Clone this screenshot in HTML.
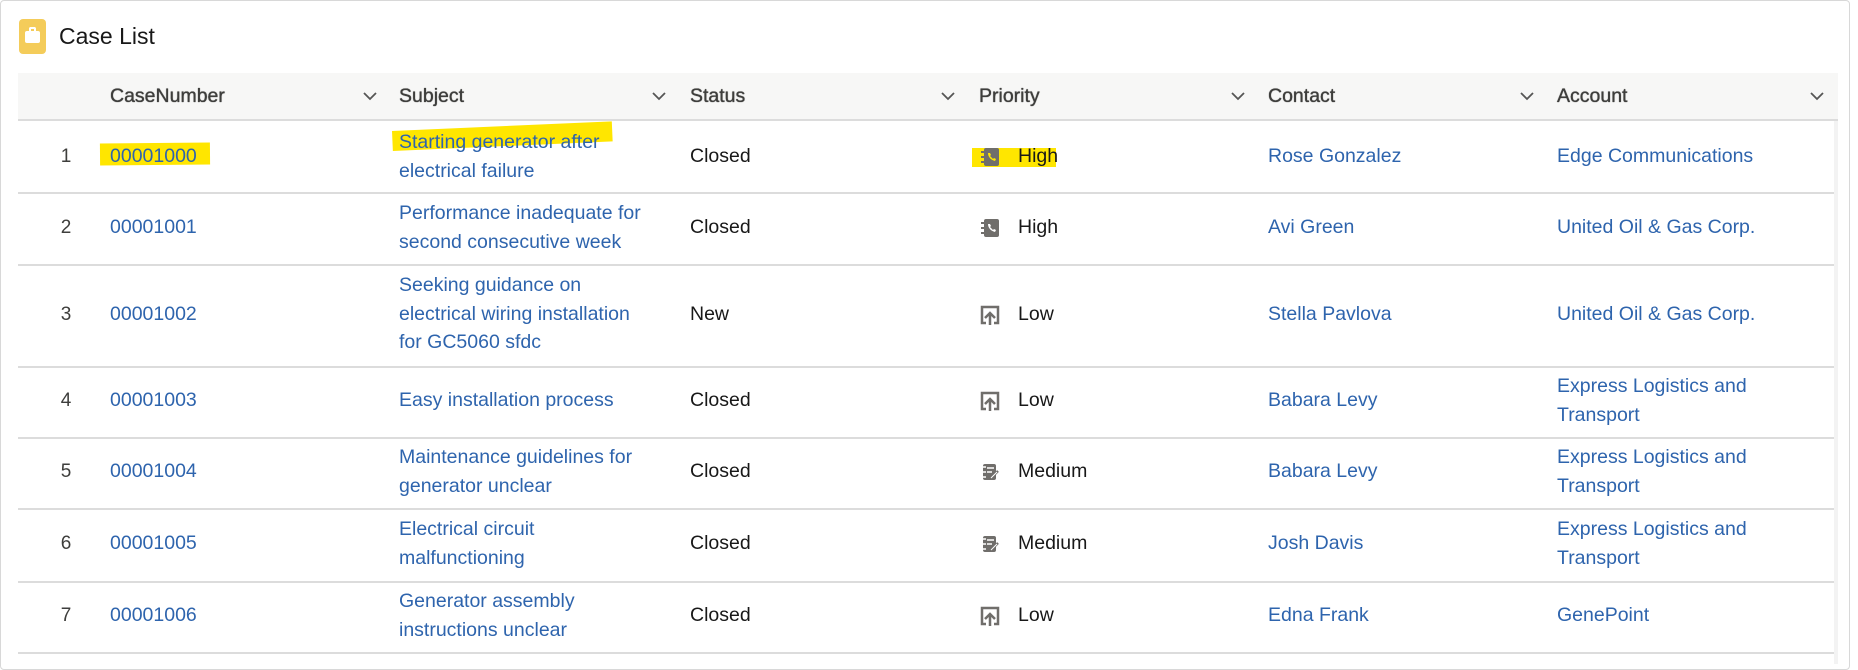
<!DOCTYPE html>
<html><head><style>
body{margin:0;width:1858px;height:664px;background:#fff;font-family:"Liberation Sans",sans-serif;overflow:hidden;position:relative}
.card{position:absolute;left:0;top:0;width:1850px;height:670px;border:1px solid #d8d8d8;border-radius:4px;box-sizing:border-box}
.t{position:absolute;font-size:19.5px;line-height:28.5px;color:#181818;white-space:nowrap}
.a{color:#2e64ad}
.h{position:absolute;left:18px;top:73px;width:1820px;height:48px;background:#f7f7f6;border-bottom:2px solid #dcdcdc;box-sizing:border-box}
.hl{position:absolute;top:85px;font-size:19.5px;color:#3e3e3c;text-shadow:0 0 .6px #3e3e3c,0 0 .6px #3e3e3c}
.ch{position:absolute;top:88px;width:16px;height:16px}
.line{position:absolute;left:18px;width:1816px;height:2px;background:#dcdcdc}
.n{position:absolute;width:20px;text-align:center;font-size:19px;line-height:28px;color:#3e3e3c}
.y{position:absolute;background:#ffe600}
.ic{position:absolute;width:20px;height:20px}
</style></head><body>
<div class="card"></div>
<div style="position:absolute;left:1834px;top:121px;width:4px;height:543px;background:#f3f3f3"></div>
<div style="position:absolute;left:19px;top:19px;width:27px;height:35px;background:#f4cc5a;border-radius:4px"></div>
<div style="position:absolute;left:25px;top:31px;width:15px;height:12px;background:#fff;border-radius:2px"></div>
<div style="position:absolute;left:29px;top:27px;width:7px;height:5px;border:2px solid #fff;border-bottom:none;box-sizing:border-box;border-radius:2px 2px 0 0"></div>
<div class="t" style="left:59px;top:21px;font-size:23px;line-height:30px;color:#181818">Case List</div>
<div class="h"></div>
<div class="hl" style="left:110px">CaseNumber</div>
<div class="hl" style="left:399px">Subject</div>
<div class="hl" style="left:690px">Status</div>
<div class="hl" style="left:979px">Priority</div>
<div class="hl" style="left:1268px">Contact</div>
<div class="hl" style="left:1557px">Account</div>
<svg class="ch" style="left:362px" viewBox="0 0 16 16"><path d="M2 5l6 6 6-6" fill="none" stroke="#555" stroke-width="1.8"/></svg>
<svg class="ch" style="left:651px" viewBox="0 0 16 16"><path d="M2 5l6 6 6-6" fill="none" stroke="#555" stroke-width="1.8"/></svg>
<svg class="ch" style="left:940px" viewBox="0 0 16 16"><path d="M2 5l6 6 6-6" fill="none" stroke="#555" stroke-width="1.8"/></svg>
<svg class="ch" style="left:1230px" viewBox="0 0 16 16"><path d="M2 5l6 6 6-6" fill="none" stroke="#555" stroke-width="1.8"/></svg>
<svg class="ch" style="left:1519px" viewBox="0 0 16 16"><path d="M2 5l6 6 6-6" fill="none" stroke="#555" stroke-width="1.8"/></svg>
<svg class="ch" style="left:1809px" viewBox="0 0 16 16"><path d="M2 5l6 6 6-6" fill="none" stroke="#555" stroke-width="1.8"/></svg>

<!-- highlights -->
<div class="y" style="left:100px;top:143px;width:110px;height:22px;transform:rotate(-0.5deg)"></div>
<div class="y" style="left:392px;top:131px;width:220px;height:20px;transform:rotate(-2.5deg);transform-origin:0 0"></div>
<div class="y" style="left:972px;top:148px;width:84px;height:19px"></div>

<div class="line" style="top:192px"></div>
<div class="line" style="top:264px"></div>
<div class="line" style="top:366px"></div>
<div class="line" style="top:437px"></div>
<div class="line" style="top:508px"></div>
<div class="line" style="top:581px"></div>
<div class="line" style="top:652px"></div>

<!-- rows -->
<div class="n" style="left:56px;top:143px">1</div>
<div class="t a" style="left:110px;top:142px">00001000</div>
<div class="t a" style="left:399px;top:128px">Starting generator after<br>electrical failure</div>
<div class="t" style="left:690px;top:142px">Closed</div>
<div class="t" style="left:1018px;top:142px">High</div>
<div class="t a" style="left:1268px;top:142px">Rose Gonzalez</div>
<div class="t a" style="left:1557px;top:142px">Edge Communications</div>

<div class="n" style="left:56px;top:214px">2</div>
<div class="t a" style="left:110px;top:213px">00001001</div>
<div class="t a" style="left:399px;top:199px">Performance inadequate for<br>second consecutive week</div>
<div class="t" style="left:690px;top:213px">Closed</div>
<div class="t" style="left:1018px;top:213px">High</div>
<div class="t a" style="left:1268px;top:213px">Avi Green</div>
<div class="t a" style="left:1557px;top:213px">United Oil &amp; Gas Corp.</div>

<div class="n" style="left:56px;top:301px">3</div>
<div class="t a" style="left:110px;top:300px">00001002</div>
<div class="t a" style="left:399px;top:271px">Seeking guidance on<br>electrical wiring installation<br>for GC5060 sfdc</div>
<div class="t" style="left:690px;top:300px">New</div>
<div class="t" style="left:1018px;top:300px">Low</div>
<div class="t a" style="left:1268px;top:300px">Stella Pavlova</div>
<div class="t a" style="left:1557px;top:300px">United Oil &amp; Gas Corp.</div>

<div class="n" style="left:56px;top:387px">4</div>
<div class="t a" style="left:110px;top:386px">00001003</div>
<div class="t a" style="left:399px;top:386px">Easy installation process</div>
<div class="t" style="left:690px;top:386px">Closed</div>
<div class="t" style="left:1018px;top:386px">Low</div>
<div class="t a" style="left:1268px;top:386px">Babara Levy</div>
<div class="t a" style="left:1557px;top:372px">Express Logistics and<br>Transport</div>

<div class="n" style="left:56px;top:458px">5</div>
<div class="t a" style="left:110px;top:457px">00001004</div>
<div class="t a" style="left:399px;top:443px">Maintenance guidelines for<br>generator unclear</div>
<div class="t" style="left:690px;top:457px">Closed</div>
<div class="t" style="left:1018px;top:457px">Medium</div>
<div class="t a" style="left:1268px;top:457px">Babara Levy</div>
<div class="t a" style="left:1557px;top:443px">Express Logistics and<br>Transport</div>

<div class="n" style="left:56px;top:530px">6</div>
<div class="t a" style="left:110px;top:529px">00001005</div>
<div class="t a" style="left:399px;top:515px">Electrical circuit<br>malfunctioning</div>
<div class="t" style="left:690px;top:529px">Closed</div>
<div class="t" style="left:1018px;top:529px">Medium</div>
<div class="t a" style="left:1268px;top:529px">Josh Davis</div>
<div class="t a" style="left:1557px;top:515px">Express Logistics and<br>Transport</div>

<div class="n" style="left:56px;top:602px">7</div>
<div class="t a" style="left:110px;top:601px">00001006</div>
<div class="t a" style="left:399px;top:587px">Generator assembly<br>instructions unclear</div>
<div class="t" style="left:690px;top:601px">Closed</div>
<div class="t" style="left:1018px;top:601px">Low</div>
<div class="t a" style="left:1268px;top:601px">Edna Frank</div>
<div class="t a" style="left:1557px;top:601px">GenePoint</div>

<!-- icons -->
<svg class="ic" style="left:980px;top:147px" viewBox="0 0 20 20"><rect x="4" y="1" width="15" height="18" rx="2" fill="#706e6b"/><rect x="1" y="4" width="4" height="2" fill="#706e6b"/><rect x="1" y="9" width="4" height="2" fill="#706e6b"/><rect x="1" y="14" width="4" height="2" fill="#706e6b"/><path d="M8 6c0 4 3 7 7 8l1-2-2-1-1 1c-1-1-2-2-3-3l1-1-1-2z" fill="#ffe600"/></svg>
<svg class="ic" style="left:980px;top:218px" viewBox="0 0 20 20"><rect x="4" y="1" width="15" height="18" rx="2" fill="#706e6b"/><rect x="1" y="4" width="4" height="2" fill="#706e6b"/><rect x="1" y="9" width="4" height="2" fill="#706e6b"/><rect x="1" y="14" width="4" height="2" fill="#706e6b"/><path d="M8 6c0 4 3 7 7 8l1-2-2-1-1 1c-1-1-2-2-3-3l1-1-1-2z" fill="#fff"/></svg>
<svg class="ic" style="left:980px;top:305px" viewBox="0 0 20 20"><path d="M6 18H2V2h16v16h-4" fill="none" stroke="#706e6b" stroke-width="2.5"/><path d="M10 20V9M5 13l5-5 5 5" fill="none" stroke="#706e6b" stroke-width="2.5"/></svg>
<svg class="ic" style="left:980px;top:391px" viewBox="0 0 20 20"><path d="M6 18H2V2h16v16h-4" fill="none" stroke="#706e6b" stroke-width="2.5"/><path d="M10 20V9M5 13l5-5 5 5" fill="none" stroke="#706e6b" stroke-width="2.5"/></svg>
<svg class="ic" style="left:980px;top:462px" viewBox="0 0 20 20"><rect x="3" y="2" width="13" height="16" rx="2" fill="#706e6b"/><path d="M1 5h5M1 10h5M1 15h5M7 6h7M7 10h5" stroke="#fff" stroke-width="1.6"/><path d="M11 16l7-7" stroke="#706e6b" stroke-width="2.5"/><path d="M11 16l6-6" stroke="#fff" stroke-width="1"/></svg>
<svg class="ic" style="left:980px;top:534px" viewBox="0 0 20 20"><rect x="3" y="2" width="13" height="16" rx="2" fill="#706e6b"/><path d="M1 5h5M1 10h5M1 15h5M7 6h7M7 10h5" stroke="#fff" stroke-width="1.6"/><path d="M11 16l7-7" stroke="#706e6b" stroke-width="2.5"/><path d="M11 16l6-6" stroke="#fff" stroke-width="1"/></svg>
<svg class="ic" style="left:980px;top:606px" viewBox="0 0 20 20"><path d="M6 18H2V2h16v16h-4" fill="none" stroke="#706e6b" stroke-width="2.5"/><path d="M10 20V9M5 13l5-5 5 5" fill="none" stroke="#706e6b" stroke-width="2.5"/></svg>
</body></html>
